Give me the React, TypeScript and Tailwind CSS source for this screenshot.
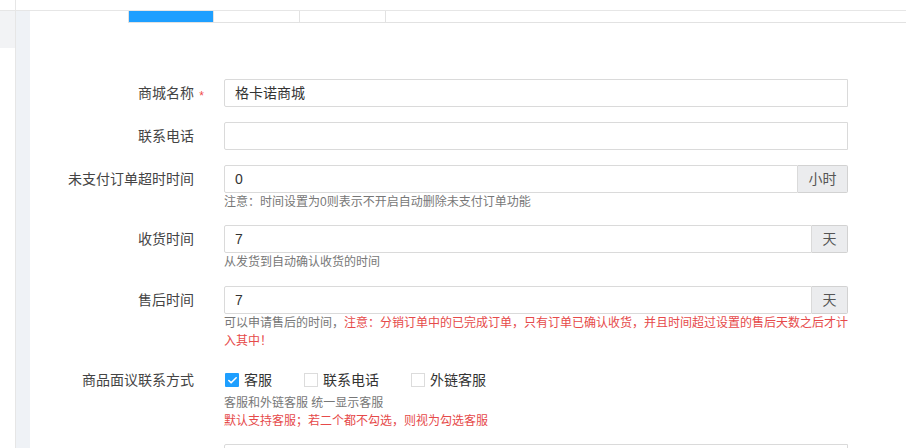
import { Check } from 'lucide-react';

const font = { fontFamily: '"Liberation Sans", "Noto Sans CJK SC", sans-serif' };

function Label({ text, required }: { text: string; required?: boolean }) {
  return (
    <div className="w-[164px] shrink-0 text-right text-[14px] leading-[28px] text-[#444]">
      <span className="relative">
        {text}
        {required && (
          <span className="absolute -right-[10px] -top-[3px] text-[12px] text-[#f04b4b]">*</span>
        )}
      </span>
    </div>
  );
}

function TextInput({ value, suffix }: { value: string; suffix?: string }) {
  return (
    <div className="flex h-[28px] w-[624px]">
      <div className="flex-1 h-full border border-[#dadada] rounded-l-[2px] pl-[10px] text-[14px] leading-[26px] text-[#333] bg-white">
        {value}
      </div>
      {suffix && (
        <div className={`h-full border border-l-0 border-[#d2d2d2] rounded-r-[2px] bg-[#ebecee] text-[14px] leading-[26px] text-[#555] text-center ${suffix.length > 1 ? 'w-[50px]' : 'w-[36px]'}`}>
          {suffix}
        </div>
      )}
    </div>
  );
}

function Box({ checked, text }: { checked?: boolean; text: string }) {
  return (
    <div className="flex items-center gap-[5px] mr-[32px]">
      {checked ? (
        <div className="w-[14px] h-[14px] bg-[#1e9fff] flex items-center justify-center rounded-[1px]">
          <Check className="w-[11px] h-[11px] text-white" strokeWidth={3.5} />
        </div>
      ) : (
        <div className="w-[14px] h-[14px] border border-[#dcdcdc] bg-white" />
      )}
      <span className="text-[14px] text-[#333]">{text}</span>
    </div>
  );
}

export default function App() {
  return (
    <div className="w-[906px] h-[448px] overflow-hidden flex bg-white" style={font}>
      {/* sidebar edge */}
      <div className="w-[16px] shrink-0 border-r border-[#e6e6e6]">
        <div className="h-[11px] border-b border-[#e6e6e6]" />
        <div className="h-[37px] bg-[#f2f3f5]" />
      </div>

      <div className="flex-1 flex flex-col">
        <div className="h-[11px] shrink-0 border-b border-[#e6e6e6]" />
        <div className="flex flex-1">
          <div className="w-[14px] shrink-0 bg-[#eff2f6]" />
          <div className="flex-1">
            {/* tabs */}
            <div className="ml-[98px] h-[12px] flex border-b border-l border-[#e2e2e2]">
              <div className="w-[85px] h-[11px] bg-[#1e9fff] border-r border-[#e2e2e2]" />
              <div className="w-[86px] h-[11px] border-r border-[#e2e2e2]" />
              <div className="w-[86px] h-[11px] border-r border-[#e2e2e2]" />
            </div>

            {/* form */}
            <div className="mt-[56px] flex flex-col">
              <div className="flex gap-[30px]">
                <Label text="商城名称" required />
                <TextInput value="格卡诺商城" />
              </div>

              <div className="flex gap-[30px] mt-[15px]">
                <Label text="联系电话" />
                <TextInput value="" />
              </div>

              <div className="flex gap-[30px] mt-[15px]">
                <Label text="未支付订单超时时间" />
                <div>
                  <TextInput value="0" suffix="小时" />
                  <p className="text-[12px] leading-[18px] text-[#777]">注意：时间设置为0则表示不开启自动删除未支付订单功能</p>
                </div>
              </div>

              <div className="flex gap-[30px] mt-[14px]">
                <Label text="收货时间" />
                <div>
                  <TextInput value="7" suffix="天" />
                  <p className="text-[12px] leading-[18px] text-[#777]">从发货到自动确认收货的时间</p>
                </div>
              </div>

              <div className="flex gap-[30px] mt-[15px]">
                <Label text="售后时间" />
                <div className="w-[624px]">
                  <TextInput value="7" suffix="天" />
                  <p className="w-[630px] text-[12px] leading-[18px] text-[#777]">
                    可以申请售后的时间，<span className="text-[#e64a4a]">注意：分销订单中的已完成订单，只有订单已确认收货，并且时间超过设置的售后天数之后才计入其中！</span>
                  </p>
                </div>
              </div>

              <div className="flex gap-[30px] mt-[16px]">
                <Label text="商品面议联系方式" />
                <div>
                  <div className="h-[28px] flex items-center ml-[1px]">
                    <Box checked text="客服" />
                    <Box text="联系电话" />
                    <Box text="外链客服" />
                  </div>
                  <p className="text-[12px] leading-[18px] text-[#777]">客服和外链客服 统一显示客服</p>
                  <p className="text-[12px] leading-[18px] text-[#e64a4a]">默认支持客服；若二个都不勾选，则视为勾选客服</p>
                </div>
              </div>

              <div className="flex gap-[30px] mt-[14px]">
                <div className="w-[164px] shrink-0" />
                <TextInput value="" />
              </div>
            </div>
          </div>
        </div>
      </div>
    </div>
  );
}
